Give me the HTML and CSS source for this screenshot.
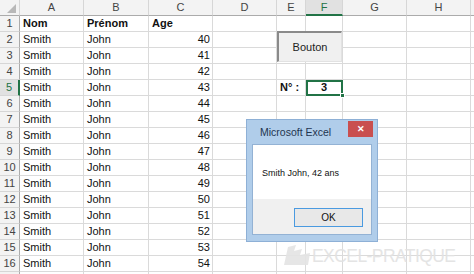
FILE: index.html
```html
<!DOCTYPE html>
<html lang="fr">
<head>
  <meta charset="UTF-8" />
  <meta name="viewport" content="width=device-width, initial-scale=1.0"/>
  <title>Excel - MsgBox</title>
  <link rel="stylesheet" href="styles.css">
</head>
<body>

  <div class="sheet">
    <div class="grid" id="grid">
      <!-- cells are built by the script below -->
    </div>

    <button class="form-btn">Bouton</button>

    <div class="dialog">
      <div class="dialog-title">
        <span>Microsoft Excel</span>
        <button class="close-btn">✕</button>
      </div>
      <div class="dialog-body">
        <div class="dialog-msg">Smith John, 42 ans</div>
        <div class="dialog-foot">
          <button class="ok-btn">OK</button>
        </div>
      </div>
    </div>

    <div class="watermark">
      <svg width="30" height="20" viewBox="0 0 30 20">
        <path d="M6 2 L14 0 L12 6 L20 4 L18 10 L28 8 L26 20 L2 20 Z" fill="#e4e4e4"/>
      </svg>
      <span>EXCEL-PRATIQUE</span>
    </div>
  </div>

  <script>
    const cols = ["A", "B", "C", "D", "E", "F", "G", "H", ""];
    const grid = document.getElementById("grid");

    function cell(cls, text) {
      const div = document.createElement("div");
      div.className = "cell " + cls;
      div.textContent = text || "";
      grid.appendChild(div);
      return div;
    }

    // header row
    cell("hd corner").innerHTML = '<span class="tri"></span>';
    cols.forEach(c => cell(c === "F" ? "hd sel-col" : "hd", c));

    // data rows (row 17 only shows its top edge)
    for (let r = 1; r <= 17; r++) {
      cell(r === 5 ? "rh sel-row" : "rh", r < 17 ? r : "");
      for (let i = 0; i < cols.length; i++) {
        let text = "";
        let cls = "";
        if (r === 17) {
          text = "";
        } else if (r === 1) {
          text = ["Nom", "Prénom", "Age"][i] || "";
          cls = "bold";
        } else if (i === 0) {
          text = "Smith";
        } else if (i === 1) {
          text = "John";
        } else if (i === 2) {
          text = 38 + r;
          cls = "num";
        }
        if (r === 5 && i === 4) { text = "N° :"; cls = "bold label"; }
        if (r === 5 && i === 5) { text = "3"; cls = "bold active"; }
        const div = cell(cls, text);
        if (r === 5 && i === 5) div.innerHTML += '<span class="handle"></span>';
      }
    }
  </script>

</body>
</html>
```

FILE: styles.css
```css
* {
  box-sizing: border-box;
}

body {
  margin: 0;
  background: #fff;
  overflow: hidden;
  font-family: "Liberation Sans", Arial, sans-serif;
}

.sheet {
  position: relative;
  width: 474px;
  height: 274px;
  overflow: hidden;
}

.grid {
  display: grid;
  grid-template-columns: 20px 64px 65px 64px 64px 29px 37px 64px 64px 20px;
  grid-template-rows: 16px;
  grid-auto-rows: 16px;
}

.cell {
  position: relative;
  border-right: 1px solid #dadada;
  border-bottom: 1px solid #dadada;
  font-size: 11px;
  line-height: 15px;
  color: #111;
  padding: 0 3px;
  white-space: nowrap;
  overflow: visible;
}

.hd {
  background: #f3f3f3;
  border-right-color: #d6d6d6;
  border-bottom-color: #ababab;
  text-align: center;
  color: #444;
  line-height: 15px;
}

.corner .tri {
  position: absolute;
  right: 3px;
  bottom: 2px;
  width: 0;
  height: 0;
  border-left: 9px solid transparent;
  border-bottom: 9px solid #b8b8b8;
}

.rh {
  background: #f3f3f3;
  border-right-color: #ababab;
  border-bottom-color: #d6d6d6;
  text-align: center;
  color: #444;
  padding: 0;
}

.sel-col {
  background: #e1e1e1;
  color: #217346;
  border-bottom: 2px solid #217346;
}

.sel-row {
  background: #e1e1e1;
  color: #217346;
  border-right: 2px solid #217346;
}

.bold {
  font-weight: bold;
}

.num {
  text-align: right;
  padding-right: 2px;
}

.label {
  padding-left: 3px;
}

.active {
  text-align: center;
  outline: 2px solid #217346;
  outline-offset: -2px;
  z-index: 1;
}

.handle {
  position: absolute;
  right: -3px;
  bottom: -3px;
  width: 5px;
  height: 5px;
  background: #217346;
  border: 1px solid #fff;
}

.form-btn {
  position: absolute;
  left: 277px;
  top: 31px;
  width: 65px;
  height: 31px;
  background: #f0f0f0;
  border: none;
  border-top: 2px solid #8a8a8a;
  border-left: 2px solid #8a8a8a;
  border-right: 1px solid #e2e2e2;
  border-bottom: 1px solid #e2e2e2;
  font-family: "Liberation Sans", Arial, sans-serif;
  font-size: 11px;
  color: #222;
  padding: 0;
}

.dialog {
  position: absolute;
  left: 246px;
  top: 119px;
  width: 132px;
  height: 123px;
  background: #b0cdea;
  border: 1px solid #8eb0d6;
  padding: 0 5px 6px 5px;
  display: flex;
  flex-direction: column;
}

.dialog-title {
  height: 24px;
  display: flex;
  align-items: flex-start;
  justify-content: space-between;
}

.dialog-title span {
  font-size: 10.5px;
  color: #1f3550;
  padding: 6px 0 0 8px;
}

.close-btn {
  width: 25px;
  height: 16px;
  margin-top: 1px;
  margin-right: -1px;
  background: #c94f4f;
  border: none;
  color: #fff;
  font-size: 9px;
  font-weight: bold;
  line-height: 16px;
  padding: 0;
}

.dialog-body {
  flex: 1;
  display: flex;
  flex-direction: column;
  border: 1px solid #93b2d4;
}

.dialog-msg {
  height: 54px;
  background: #fff;
  font-size: 9px;
  color: #111;
  padding: 23px 0 0 9px;
}

.dialog-foot {
  flex: 1;
  background: #f0f0f0;
  display: flex;
  justify-content: flex-end;
  align-items: flex-start;
  padding: 9px 8px 0 0;
}

.ok-btn {
  width: 69px;
  height: 19px;
  background: #e8e8e8;
  border: 1px solid #4a9ae0;
  font-family: "Liberation Sans", Arial, sans-serif;
  font-size: 10px;
  color: #111;
  padding: 0;
}

.watermark {
  position: absolute;
  left: 282px;
  top: 245px;
  display: flex;
  align-items: flex-end;
  gap: 0;
  opacity: 0.9;
}

.watermark span {
  font-size: 19px;
  line-height: 19px;
  color: #e2e2e2;
  letter-spacing: -0.6px;
  transform: scaleX(0.92);
  transform-origin: left;
}
```
